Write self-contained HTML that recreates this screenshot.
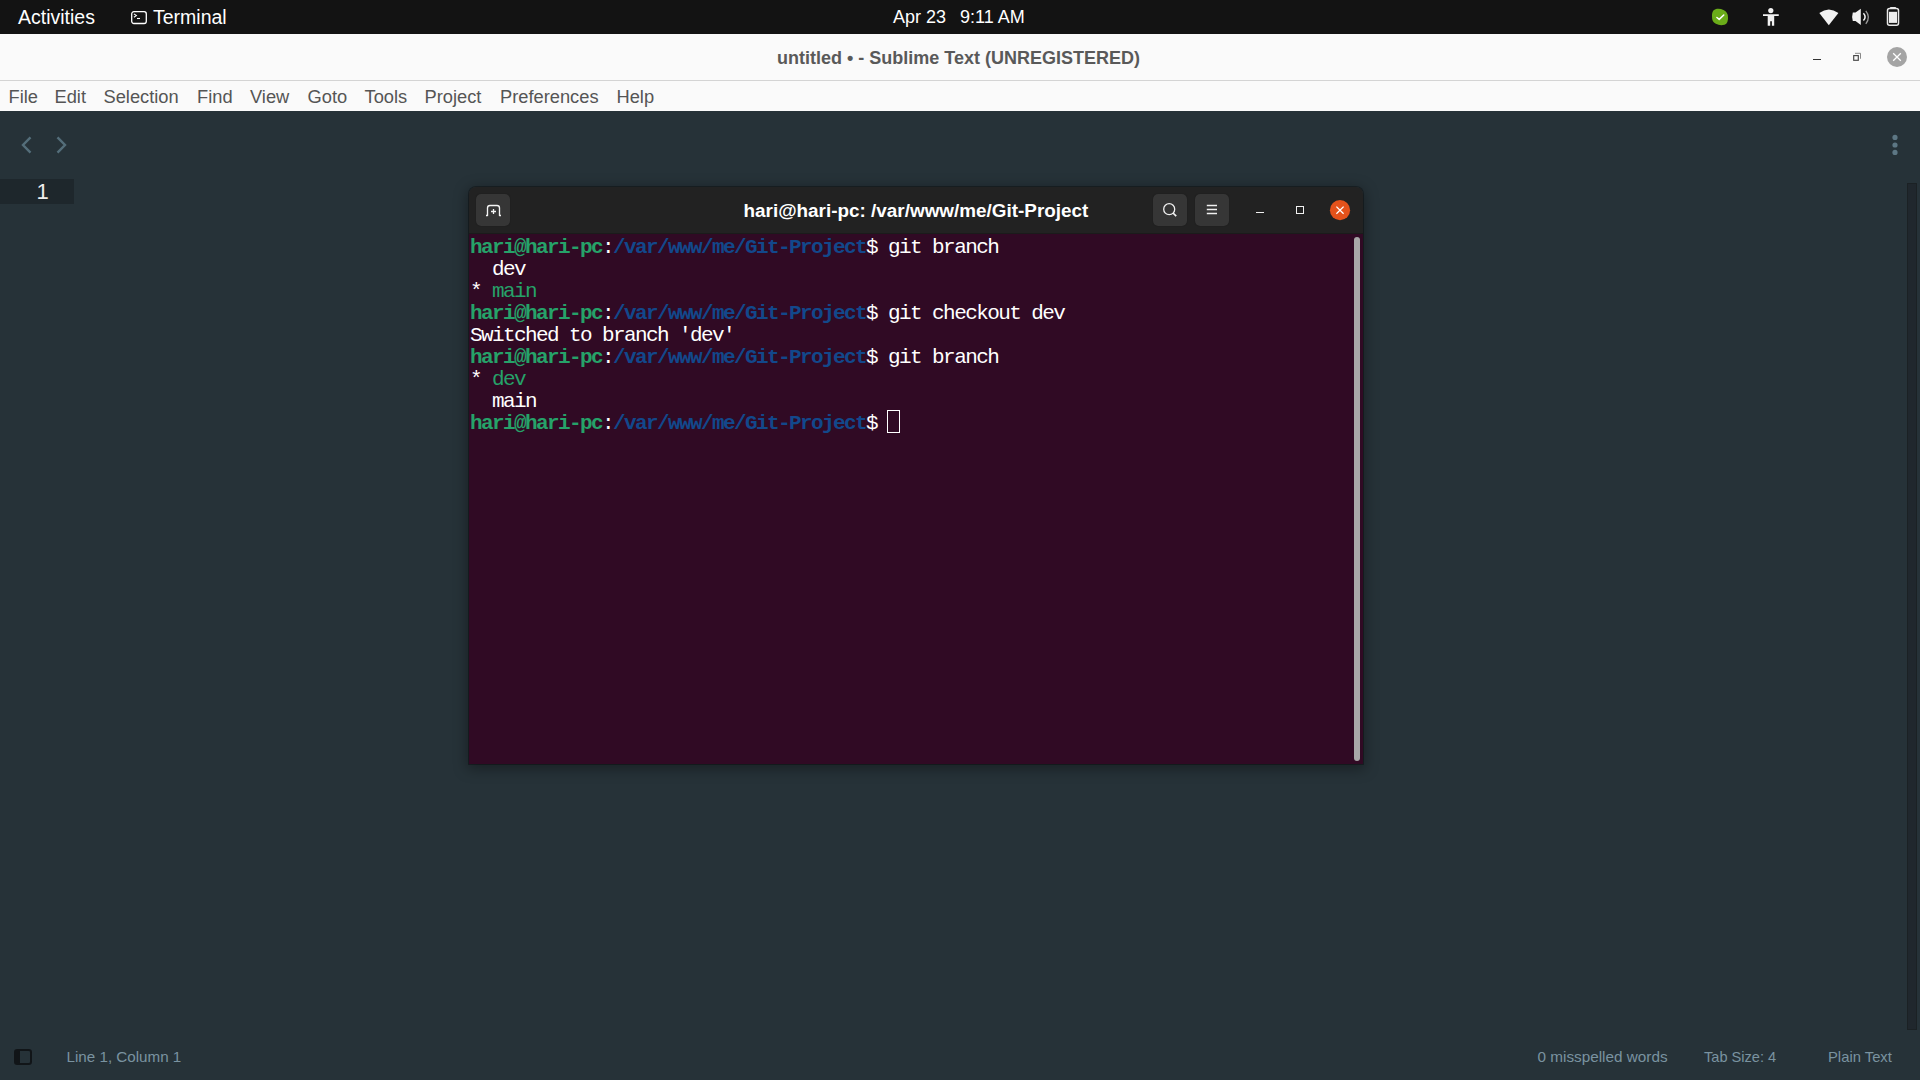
<!DOCTYPE html>
<html><head><meta charset="utf-8">
<style>
html,body{margin:0;padding:0;width:1920px;height:1080px;overflow:hidden;background:#263238;font-family:"Liberation Sans",sans-serif;}
.abs{position:absolute;white-space:nowrap;}
svg.abs{overflow:visible;}
#topbar{position:absolute;left:0;top:0;width:1920px;height:34px;background:#131313;}
#topbar .t{position:absolute;color:#fff;font-size:18px;line-height:18px;white-space:pre;}
#titlebar{position:absolute;left:0;top:34px;width:1920px;height:46px;background:#fafafa;}
#tline{position:absolute;left:0;top:80px;width:1920px;height:1px;background:#d4d4d4;}
#menubar{position:absolute;left:0;top:81px;width:1920px;height:30px;background:#fafafa;}
#menubar .m{position:absolute;top:6.5px;color:#555555;font-size:18.3px;line-height:18.3px;}
#editor{position:absolute;left:0;top:111px;width:1920px;height:969px;background:#263238;}
.st{position:absolute;color:#7a93a0;font-size:15.2px;line-height:15.2px;white-space:nowrap;}
#term{position:absolute;left:469px;top:187px;width:894px;height:577px;border-radius:7px 7px 0 0;overflow:hidden;box-shadow:0 0 0 1px rgba(0,0,0,0.3),0 3px 14px 2px rgba(0,0,0,0.35);}
#thead{position:absolute;left:0;top:0;width:894px;height:46px;background:#222222;border-bottom:1px solid #1b1b1b;}
#tbody{position:absolute;left:0;top:47px;width:894px;height:530px;background:#300a24;}
.btn{position:absolute;background:#363636;border-radius:5px;box-shadow:0 0 1px rgba(0,0,0,0.5);}
.tl{position:absolute;left:1px;font-family:"Liberation Mono",monospace;font-size:21px;letter-spacing:-1.6px;line-height:22px;color:#ffffff;white-space:pre;}
.g{color:#26a269;font-weight:bold;}
.b{color:#12488b;font-weight:bold;}
.gn{color:#26a269;}
</style></head>
<body>
<div id="topbar">
  <div class="t" style="left:18px;top:8px;font-size:19.5px;line-height:19.5px;">Activities</div>
  <svg class="abs" style="left:131px;top:11px" width="17" height="14" viewBox="0 0 17 14"><rect x="0.7" y="0.7" width="14.6" height="11.8" rx="2.2" fill="none" stroke="#fff" stroke-width="1.3"/><path d="M2.9 2.9 L5.4 4.6 L2.9 6.3" fill="none" stroke="#fff" stroke-width="1.1"/><path d="M6 7.5 H9" stroke="#fff" stroke-width="1.1"/></svg>
  <div class="t" style="left:153px;top:8px;font-size:19.5px;line-height:19.5px;">Terminal</div>
  <div class="t" style="left:893px;top:7.5px;">Apr 23</div>
  <div class="t" style="left:960px;top:7.5px;">9:11 AM</div>
  <!-- green status -->
  <svg class="abs" style="left:1711px;top:8px" width="18" height="18" viewBox="0 0 18 18"><path d="M4.5 1.2 C7 0.6 10 0.8 12.5 2 C15.5 3.5 17.2 6 17 9.5 C17 12.5 16.5 15.8 13.5 16.8 C10.5 17.6 7.5 17.3 4.8 15.8 C2 14.3 0.9 12 1 8.5 C1 5 1.5 2 4.5 1.2 Z" fill="#6aac19"/><path d="M5.9 9.5 L8.2 11.4 L12.75 7" fill="none" stroke="#fff" stroke-width="1.5" stroke-linecap="round" stroke-linejoin="round"/></svg>
  <!-- accessibility -->
  <svg class="abs" style="left:1762px;top:7px" width="18" height="20" viewBox="0 0 18 20"><circle cx="8.8" cy="3.6" r="2.6" fill="#f2f2f2"/><path d="M1 7.2 H16.75 V9 H12.2 V18.8 H9.9 V14.25 H8.2 V18.8 H5.7 V9 H1 Z" fill="#f2f2f2"/></svg>
  <!-- wifi -->
  <svg class="abs" style="left:1819px;top:9px" width="20" height="17" viewBox="0 0 20 17"><path d="M0.3 4 Q9.8 -3 19.4 4 L9.8 16.2 Z" fill="#f2f2f2"/></svg>
  <!-- volume -->
  <svg class="abs" style="left:1851px;top:8px" width="20" height="18" viewBox="0 0 20 18"><path d="M1.8 4.5 H4.5 L9.8 0.8 V17 L4.5 13 H1.8 Q0.5 8.8 1.8 4.5 Z" fill="#f2f2f2"/><path d="M12.4 5.2 Q15.8 8.9 12.4 12.6" fill="none" stroke="#f2f2f2" stroke-width="1.5"/><path d="M14.8 2.9 Q20 9.35 14.8 15.8" fill="none" stroke="#9a9a9a" stroke-width="1.3"/></svg>
  <!-- battery -->
  <svg class="abs" style="left:1886px;top:6px" width="14" height="21" viewBox="0 0 14 21"><rect x="4" y="1" width="6" height="2" rx="0.8" fill="#e8e8e8"/><rect x="1.5" y="2.5" width="11" height="16.8" rx="2" fill="none" stroke="#e8e8e8" stroke-width="1.5"/><rect x="3" y="5.8" width="8" height="11.1" fill="#eeeeee"/></svg>
</div>
<div id="titlebar">
  <div class="abs" style="left:777px;top:15.3px;font-size:18px;font-weight:bold;color:#595959;line-height:18px;">untitled &#8226; - Sublime Text (UNREGISTERED)</div>
  <div class="abs" style="left:1813px;top:24.5px;width:8px;height:1.6px;background:#333;"></div>
  <svg class="abs" style="left:1852px;top:18px" width="11" height="10" viewBox="0 0 11 10"><rect x="1.7" y="3.6" width="4.6" height="4.7" fill="none" stroke="#474747" stroke-width="1.15"/><path d="M3 1.3 H8.5 V6.75" fill="none" stroke="#7a7a7a" stroke-width="0.9"/></svg>
  <svg class="abs" style="left:1887px;top:13px" width="20" height="20" viewBox="0 0 20 20"><circle cx="10" cy="10" r="10" fill="#a4a4a4"/><path d="M6.2 6.2 L13.8 13.8 M13.8 6.2 L6.2 13.8" stroke="#fff" stroke-width="1.3"/></svg>
</div>
<div id="tline"></div>
<div id="menubar">
  <div class="m" style="left:8.5px">File</div>
  <div class="m" style="left:54.5px">Edit</div>
  <div class="m" style="left:103.5px">Selection</div>
  <div class="m" style="left:197px">Find</div>
  <div class="m" style="left:250px">View</div>
  <div class="m" style="left:307.5px">Goto</div>
  <div class="m" style="left:364.5px">Tools</div>
  <div class="m" style="left:424.5px">Project</div>
  <div class="m" style="left:500px">Preferences</div>
  <div class="m" style="left:616.5px">Help</div>
</div>
<div id="editor">
  <svg class="abs" style="left:20px;top:25px" width="50" height="18" viewBox="0 0 50 18"><path d="M10.5 1.3 L3 9 L10.5 16.7" fill="none" stroke="#546e7a" stroke-width="2.4"/><path d="M37.5 1.3 L45 9 L37.5 16.7" fill="none" stroke="#546e7a" stroke-width="2.4"/></svg>
  <svg class="abs" style="left:1891px;top:23px" width="8" height="22" viewBox="0 0 8 22"><circle cx="4" cy="3.4" r="2.6" fill="#5d7784"/><circle cx="4" cy="11" r="2.6" fill="#5d7784"/><circle cx="4" cy="18.4" r="2.6" fill="#5d7784"/></svg>
  <div class="abs" style="left:0;top:68px;width:74px;height:25px;background:#1e272c;"></div>
  <div class="abs" style="left:36.5px;top:70px;font-size:22px;line-height:22px;color:#eeeeee;">1</div>
  <div class="abs" style="left:1907px;top:72px;width:10px;height:847px;box-sizing:border-box;border:1px solid #1b2124;background:#20272d;"></div>
  <svg class="abs" style="left:14px;top:938px" width="18" height="16" viewBox="0 0 18 16"><rect x="1" y="1" width="16" height="14" rx="2.2" fill="#263238" stroke="#111518" stroke-width="2"/><rect x="1" y="1" width="5" height="14" fill="#111518"/></svg>
  <div class="st" style="left:66.5px;top:938px;">Line 1, Column 1</div>
  <div class="st" style="left:1537.5px;top:938px;font-size:15.3px;">0 misspelled words</div>
  <div class="st" style="left:1704px;top:938.5px;font-size:14.6px;">Tab Size: 4</div>
  <div class="st" style="left:1828px;top:938.5px;font-size:14.8px;">Plain Text</div>
</div>
<div id="term">
  <div id="thead">
    <div class="btn" style="left:7px;top:7px;width:34px;height:32px;"></div>
    <svg class="abs" style="left:16px;top:17px" width="17" height="13" viewBox="0 0 17 13"><path d="M1 11.5 H2.5 V4 Q2.5 1.5 5 1.5 H12 Q14.5 1.5 14.5 4 V11.5 H16" fill="none" stroke="#f4f4f4" stroke-width="1.35" stroke-linejoin="round"/><path d="M8.5 5 V10 M6 7.5 H11" stroke="#f4f4f4" stroke-width="1.3"/></svg>
    <div class="abs" style="left:274.5px;top:13.5px;font-size:18.9px;line-height:19px;font-weight:bold;color:#ffffff;">hari@hari-pc: /var/www/me/Git-Project</div>
    <div class="btn" style="left:684px;top:7px;width:34px;height:32px;"></div>
    <svg class="abs" style="left:692px;top:14px" width="18" height="18" viewBox="0 0 18 18"><circle cx="8.2" cy="8.2" r="5.5" fill="none" stroke="#f0f0f0" stroke-width="1.3"/><path d="M12 12 L15.2 15.2" stroke="#f0f0f0" stroke-width="1.7"/></svg>
    <div class="btn" style="left:726px;top:7px;width:34px;height:32px;"></div>
    <svg class="abs" style="left:737px;top:17px" width="12" height="12" viewBox="0 0 12 12"><path d="M0.8 1.5 H11 M0.8 5.5 H11 M0.8 9.5 H11" stroke="#f0f0f0" stroke-width="1.4"/></svg>
    <div class="abs" style="left:787px;top:24.5px;width:8.2px;height:1.8px;background:#f0f0f0;"></div>
    <div class="abs" style="left:826.5px;top:19px;width:6.2px;height:6.2px;border:1.2px solid #f0f0f0;"></div>
    <svg class="abs" style="left:861px;top:13px" width="20" height="21" viewBox="0 0 20 21"><circle cx="10" cy="10.2" r="10.1" fill="#e4521b"/><path d="M6.4 6.6 L13.6 13.8 M13.6 6.6 L6.4 13.8" stroke="#fff" stroke-width="1.3"/></svg>
  </div>
  <div id="tbody">
    <div class="tl" style="top:3px"><span class="g">hari@hari-pc</span>:<span class="b">/var/www/me/Git-Project</span>$ git branch</div>
    <div class="tl" style="top:25px">  dev</div>
    <div class="tl" style="top:47px">* <span class="gn">main</span></div>
    <div class="tl" style="top:69px"><span class="g">hari@hari-pc</span>:<span class="b">/var/www/me/Git-Project</span>$ git checkout dev</div>
    <div class="tl" style="top:91px">Switched to branch 'dev'</div>
    <div class="tl" style="top:113px"><span class="g">hari@hari-pc</span>:<span class="b">/var/www/me/Git-Project</span>$ git branch</div>
    <div class="tl" style="top:135px">* <span class="gn">dev</span></div>
    <div class="tl" style="top:157px">  main</div>
    <div class="tl" style="top:179px"><span class="g">hari@hari-pc</span>:<span class="b">/var/www/me/Git-Project</span>$ </div>
    <div class="abs" style="left:418px;top:176px;width:10.5px;height:21px;border:1.5px solid #fff;"></div>
    <div class="abs" style="left:885px;top:3px;width:6px;height:524px;border-radius:3px;background:#a8a8a8;"></div>
  </div>
</div>
</body></html>
